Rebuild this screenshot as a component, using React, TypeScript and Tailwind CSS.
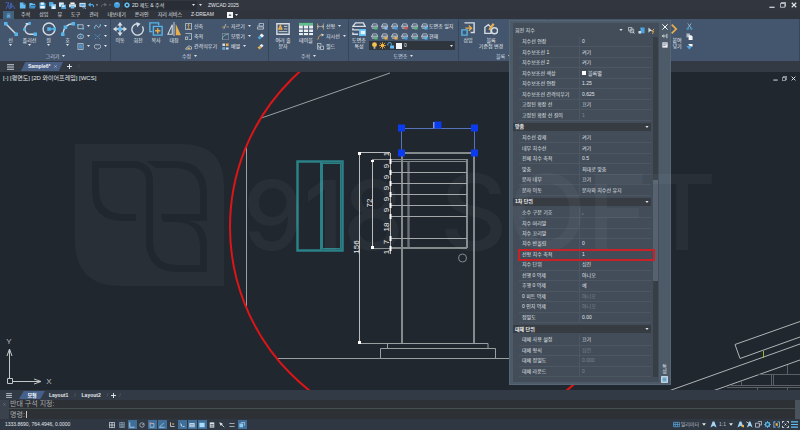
import { ReactNode } from 'react'

type Section = { title: string | null; rows: PropertyRow[] }
type PropertyRow = { label: string; value: string; dim?: boolean; swatch?: boolean; marked?: boolean }

const MENUS = ['주석', '삽입', '뷰', '도구', '관리', '내보내기', '온라인', '지리 서비스', 'Z-DREAM']

const SECTIONS: Section[] = [
  {
    title: null,
    rows: [
      { label: '치수선 연장', value: '0' },
      { label: '치수보조선 1', value: '켜기' },
      { label: '치수보조선 2', value: '켜기' },
      { label: '치수보조선 색상', value: '블록별', swatch: true },
      { label: '치수보조선 연장', value: '1.25' },
      { label: '치수보조선 간격띄우기', value: '0.625' },
      { label: '고정된 확장 선', value: '끄기' },
      { label: '고정된 확장 선 길이', value: '1', dim: true },
    ],
  },
  {
    title: '맞춤',
    rows: [
      { label: '치수선 강제', value: '켜기' },
      { label: '내부 치수선', value: '켜기' },
      { label: '전체 치수 축척', value: '0.5' },
      { label: '맞춤', value: '최대로 맞춤' },
      { label: '문자 내부', value: '끄기' },
      { label: '문자 이동', value: '문자와 치수선 유지' },
    ],
  },
  {
    title: '1차 단위',
    rows: [
      { label: '소수 구분 기호', value: ',' },
      { label: '치수 머리말', value: '' },
      { label: '치수 꼬리말', value: '' },
      { label: '치수 반올림', value: '0' },
      { label: '선형 치수 축척', value: '1', marked: true },
      { label: '치수 단위', value: '십진' },
      { label: '선행 0 억제', value: '아니오' },
      { label: '후행 0 억제', value: '예' },
      { label: '0 피트 억제', value: '아니오', dim: true },
      { label: '0 인치 억제', value: '아니오', dim: true },
      { label: '정밀도', value: '0.00' },
    ],
  },
  {
    title: '대체 단위',
    rows: [
      { label: '대체 사용 설정', value: '끄기' },
      { label: '대체 형식', value: '십진', dim: true },
      { label: '대체 정밀도', value: '0.000', dim: true },
      { label: '대체 라운드', value: '0', dim: true },
    ],
  },
]

const BLUE = '#55b4ea'
const LIGHT = '#d5dce4'
const ORANGE = '#e8ae4c'

function Svg({ children, className = 'size-[8px]' }: { children: ReactNode; className?: string }) {
  return (
    <svg viewBox="0 0 16 16" fill="none" strokeWidth="1.6" aria-hidden="true" className={`shrink-0 ${className}`}>
      {children}
    </svg>
  )
}

function Caret({ className = 'w-[4px] h-[2px]' }: { className?: string }) {
  return (
    <svg viewBox="0 0 8 5" aria-hidden="true" className={`shrink-0 ${className}`}>
      <path d="M0 0h8L4 5z" fill="#dfe4ea" />
    </svg>
  )
}

function Burger({ className = 'w-[7px] h-[6px]' }: { className?: string }) {
  return (
    <svg viewBox="0 0 14 12" aria-hidden="true" className={className}>
      <path d="M0 1.5h14M0 6h14M0 10.5h14" stroke="#dfe4ea" strokeWidth="1.8" />
    </svg>
  )
}

/* Quick access bar */
const QUICK: { name: string; art: ReactNode }[] = [
  { name: '새로 만들기', art: <><path d="M2 1h9l4 4v10H2z" fill="#62bdf2" /><path d="M11 1v4h4" stroke="#30363f" /></> },
  { name: '열기', art: <><path d="M1 2h6l2 2h5v3H5l-3 7H1z" fill="#62bdf2" /><path d="M5 8h11l-3 7H2z" fill="#3f93cc" /></> },
  { name: '저장', art: <><path d="M1 1h12l2 2v12H1z" fill="#4ca5de" /><path d="M4 1h7v5H4zM3 9h10v6H3z" fill="#f1f6fa" /></> },
  { name: '다른 이름으로 저장', art: <><path d="M0 0h10v10H0z" fill="#4ca5de" /><path d="M5 5h11v11H5z" fill="#8dcaf0" /><path d="M8 10h5v6H8z" fill="#fff" /></> },
  { name: '모두 저장', art: <><path d="M0 1h11v10H0z" fill="#dcecf7" /><path d="M5 6h11v10H5z" fill="#4ca5de" /><path d="M7 8h6v3H7z" fill="#fff" /></> },
  { name: '인쇄', art: <><path d="M3 1h10v4H3z" fill="#f0f4f7" /><path d="M0 5h16v7H0z" fill="#cdd6df" /><path d="M4 9h8v6H4z" fill="#62bdf2" /></> },
  { name: '미리보기', art: <><path d="M1 2h14v9H1z" fill="#e8eff5" /><path d="M3 4h10v5H3z" fill="#4ca5de" /><circle cx="11" cy="11" r="3" stroke="#8dcaf0" /><path d="M13 13l3 3" stroke="#8dcaf0" /></> },
]

function TitleBar() {
  return (
    <header className="h-[10px] flex items-center bg-[#31363f] pl-[4px]">
      <Svg className="w-[12px] h-[9px] mr-[1px]">
        <path d="M0 3h6L1 14M6 7v6h3V4h2v9M11 9c3-1 5 1 5 5" stroke="#4a6fd8" strokeWidth="1.4" />
      </Svg>
      {QUICK.map(item => (
        <button key={item.name} aria-label={item.name} className="w-[10px] flex justify-center">
          <Svg className="size-[7px]">{item.art}</Svg>
        </button>
      ))}
      <button aria-label="실행 취소" className="w-[14px] flex items-center gap-[2px] pl-[1px]">
        <Svg className="size-[6px]"><path d="M15 13c0-6-5-7-11-6" stroke={BLUE} strokeWidth="3" /><path d="M0 7l7-6v12z" fill={BLUE} /></Svg>
        <Caret className="w-[2px] h-[2px]" />
      </button>
      <button aria-label="다시 실행" className="w-[13px] flex items-center gap-[2px]">
        <Svg className="size-[6px]"><path d="M1 13c0-6 5-7 11-6" stroke="#68727e" strokeWidth="2" /><path d="M16 7L9 2v10z" fill="#68727e" /></Svg>
        <Caret className="w-[2px] h-[2px] opacity-50" />
      </button>
      <button aria-label="클라우드" className="w-[8px]">
        <Svg className="size-[6px]"><circle cx="8" cy="8" r="8" fill="#3f9fe0" /><path d="M3 6c2-3 6-4 9-1" stroke="#b5dcf5" /></Svg>
      </button>
      <button className="ml-[1px] h-[9px] w-[74px] flex items-center gap-[2px] bg-[#292e36] pl-[1px] pr-[2px]">
        <Svg className="size-[6px]"><circle cx="8" cy="8" r="5" stroke="#62bdf2" strokeWidth="4" /><path d="M8 0v16M0 8h16M2 2l12 12M14 2L2 14" stroke="#62bdf2" strokeWidth="1" strokeDasharray="3 10" /></Svg>
        <span className="flex-1 text-left">2D 제도 &amp; 주석</span>
        <Caret className="w-[3px] h-[2px]" />
      </button>
      <Caret className="ml-[2px] w-[3px] h-[2px]" />
      <span className="ml-[6px]">ZWCAD 2025</span>
      <div className="ml-auto flex items-center gap-[5px] pr-[3px]">
        <button aria-label="최소화"><Svg className="size-[6px]"><path d="M1 14h14" stroke="#e6e9ec" strokeWidth="3" /></Svg></button>
        <button aria-label="최대화"><Svg className="size-[6px]"><path d="M1 4h12v10H1zM4 3V1h11v10h-2" stroke="#e6e9ec" strokeWidth="2" /></Svg></button>
        <button aria-label="닫기"><Svg className="size-[6px]"><path d="M2 2l12 12M14 2L2 14" stroke="#e6e9ec" strokeWidth="3" /></Svg></button>
      </div>
    </header>
  )
}

function MenuBar() {
  return (
    <nav className="h-[9px] flex items-center gap-[9px] bg-[#30353d] pl-[3px]">
      <a href="#home" className="w-[11px] -mr-[2px] h-[8px] leading-[8px] text-center bg-[#3e627f] text-[#8cc9ef]">홈</a>
      {MENUS.map(menu => (
        <a key={menu} href={`#${menu}`}>{menu}</a>
      ))}
      <button aria-label="리본 표시" className="ml-[4px] flex items-center gap-[2px]">
        <Svg className="size-[6px]"><path d="M0 0h16v16H0z" fill="#f3f5f7" /><path d="M4 10l4-5 4 5z" fill="#30353d" /></Svg>
        <Caret className="w-[3px] h-[2px]" />
      </button>
    </nav>
  )
}

function Panel({ title, className, children }: { title: string; className: string; children: ReactNode }) {
  return (
    <section className={`h-full flex flex-col shrink-0 border-r border-[#37475a] ${className}`}>
      <div className="h-[32px] flex">{children}</div>
      <div className="h-[10px] flex items-center justify-center gap-[3px] text-[#d3dae2]">
        {title}
        {title && <Caret className="w-[3px] h-[2px]" />}
      </div>
    </section>
  )
}

function BigTool({ lines, art, className, caret }: { lines: string[]; art: ReactNode; className: string; caret?: boolean }) {
  return (
    <button className={`flex flex-col items-center shrink-0 pt-[3px] ${className}`}>
      <Svg className="size-[14px] mb-[1px]">{art}</Svg>
      {lines.map(line => (
        <span key={line} className="leading-[6px] whitespace-nowrap">{line}</span>
      ))}
      {caret && <Caret className="mt-[1px] w-[3px] h-[2px]" />}
    </button>
  )
}

function SmallTool({ label, text, art, caret }: { label: string; text?: boolean; art: ReactNode; caret?: boolean }) {
  return (
    <button aria-label={label} className="h-[10px] flex items-center gap-[2px] whitespace-nowrap">
      <Svg className="size-[7px]">{art}</Svg>
      {text && <span>{label}</span>}
      {caret && <Caret className="w-[3px] h-[2px] ml-[1px]" />}
    </button>
  )
}

const sheet = (color: string) => (
  <>
    <path d="M2 7l2-5h9l2 5" stroke={LIGHT} />
    <path d="M1 7h14v2H1zM2 12h7" stroke={LIGHT} />
    <path d="M8 9h7v6H8z" fill={color} />
  </>
)

const LAYER_ROWS = [
  ['#55b878', '#8db8e8', '#3f9fe0', '#d9524e', '#55b878', '#55b4ea'],
  ['#55b878', '#e8ae4c', '#e8ae4c', '#3f9fe0', '#5aa9a0', '#55b4ea'],
]

function LayerRow({ colors, label, start }: { colors: string[]; label: string; start: number }) {
  return (
    <div className="h-[10px] flex items-center">
      {colors.map((color, i) => (
        <button key={i} aria-label={`도면층 도구 ${start + i}`} className="w-[10px] flex justify-center">
          <Svg className="size-[7px]">{sheet(color)}</Svg>
        </button>
      ))}
      <button className="whitespace-nowrap">{label}</button>
    </div>
  )
}

function Ribbon() {
  return (
    <div className="h-[42px] flex overflow-hidden bg-[#44566d] text-[#e8ecf1]">
      <Panel title="그리기" className="w-[111px] pl-[1px]">
        <BigTool className="w-[19px]" caret lines={['선']} art={<><path d="M2 2l12 12" stroke={LIGHT} /><path d="M0 0h4v4H0zM12 12h4v4h-4z" fill={BLUE} /></>} />
        <BigTool className="w-[19px]" caret lines={['폴리선']} art={<><path d="M3 2h5M8 14h6" stroke={LIGHT} /><path d="M8 2a6 6 0 000 12" stroke={LIGHT} /><path d="M12 12h4v4h-4zM6 0h3v3H6zM0 7h3v3H0z" fill={BLUE} /></>} />
        <BigTool className="w-[19px]" caret lines={['원']} art={<><circle cx="8" cy="8" r="6.8" stroke={LIGHT} /><path d="M8 8h7" stroke={BLUE} /><path d="M6 6h4v4H6zM13 6h3v4h-3z" fill={BLUE} /></>} />
        <BigTool className="w-[19px]" caret lines={['호']} art={<><path d="M2 14C3 7 7 2 14 2" stroke={LIGHT} /><path d="M0 12h4v4H0zM3 4h4v4H3zM12 0h4v4h-4z" fill={BLUE} /></>} />
        <div className="grid grid-cols-2 gap-x-[4px] content-start pt-[2px]">
          <SmallTool caret label="직사각형" art={<><path d="M2 4h12v9H2z" stroke={LIGHT} /><path d="M0 2h4v4H0zM12 11h4v4h-4z" fill={BLUE} /></>} />
          <SmallTool caret label="스플라인" art={<><path d="M1 11c3-9 5-6 7-3s4 4 7-4" stroke={LIGHT} /><path d="M0 10h3v3H0zM13 3h3v3h-3z" fill={BLUE} /></>} />
          <SmallTool caret label="타원" art={<><ellipse cx="8" cy="8" rx="7" ry="5" stroke={LIGHT} /><path d="M6 6h4v4H6zM6 1h4v3H6z" fill={BLUE} /></>} />
          <SmallTool caret label="점" art={<path d="M2 3l3 3M14 3l-3 3M2 14l3-3M14 14l-3-3M7 8h3" stroke={BLUE} />} />
          <SmallTool caret label="해치" art={<><path d="M2 1h12v14H2z" stroke={LIGHT} /><path d="M4 3h8v10H4z" fill="#4a93c4" /></>} />
          <SmallTool caret label="구름형" art={<path d="M3 4h10c3 0 3 8 0 8h-2c-1 3-5 3-6 0H3c-3 0-3-8 0-8z" stroke={LIGHT} />} />
        </div>
      </Panel>

      <Panel title="수정" className="w-[158px]">
        <BigTool className="w-[18px]" lines={['이동']} art={<><path d="M8 1v14M1 8h14" stroke={LIGHT} /><path d="M8 0l3 4H5zM8 16l3-4H5zM0 8l4-3v6zM16 8l-4-3v6z" fill={LIGHT} /><path d="M6 6h4v4H6z" fill={BLUE} /></>} />
        <BigTool className="w-[18px]" lines={['회전']} art={<><path d="M7 2a6.500 6.500 0 106 3" stroke={LIGHT} /><path d="M6 0l5 2-4 4z" fill={LIGHT} /></>} />
        <BigTool className="w-[18px]" lines={['복사']} art={<><path d="M11 4V1H1v10h3" stroke={BLUE} /><path d="M5 5h10v10H5z" stroke={BLUE} /><path d="M10 7v6M7 10h6" stroke={ORANGE} /></>} />
        <BigTool className="w-[18px]" lines={['대칭']} art={<><path d="M6 3v11H1z" stroke={LIGHT} strokeWidth="1.2" /><path d="M10 2v13h6z" fill={ORANGE} /><path d="M8 0v16" stroke={LIGHT} strokeWidth="1" /></>} />
        <div className="w-[39px] flex flex-col items-start pt-[2px] pl-[2px]">
          <SmallTool text label="신축" art={<><path d="M1 1h14v14H1z" stroke={LIGHT} /><path d="M8 3v8M5 6l3-3 3 3M5 13h6" stroke={ORANGE} /></>} />
          <SmallTool text label="축척" art={<><path d="M1 1h14v14H9" stroke={LIGHT} /><path d="M1 9h5v6H1z" stroke={LIGHT} /><path d="M8 8l4-3" stroke={BLUE} /></>} />
          <SmallTool text label="간격띄우기" art={<><path d="M1 14h14V9a7 7 0 00-10 0z" stroke={LIGHT} /><path d="M6 10h5v4H6z" fill={ORANGE} /></>} />
        </div>
        <div className="w-[35px] flex flex-col items-start pt-[2px]">
          <SmallTool text caret label="자르기" art={<><path d="M0 9h5M10 9h6" stroke={ORANGE} /><path d="M4 14L9 2" stroke={LIGHT} /></>} />
          <SmallTool text caret label="모깎기" art={<><path d="M1 15V1h14v14z" stroke="#a9b6c4" strokeWidth="1" /><path d="M1 15C1 7 6 3 15 3" stroke="#8fd0b0" /></>} />
          <SmallTool text caret label="배열" art={<><path d="M1 1h6v6H1zM1 10h6v5H1zM9 10h6v5H9z" fill={LIGHT} /><path d="M9 1h6v6H9z" fill={ORANGE} /><path d="M1 10h6v5H1z" fill="#4ca5de" /></>} />
        </div>
        <div className="flex flex-col pt-[2px]">
          <SmallTool label="정렬" art={<><path d="M5 1h10v6H5z" stroke={LIGHT} /><path d="M1 9h14v5H1z" stroke={LIGHT} /><path d="M1 6h3" stroke={BLUE} /></>} />
          <SmallTool label="지우기" art={<><path d="M6 5l5-4 5 5-5 5z" fill="#f2f5f8" /><path d="M1 10l5-4 5 5-5 4z" fill="#4ca5de" /></>} />
          <SmallTool label="분해" art={<><path d="M6 5l5-3 4 4-5 5z" fill="#e6edf3" /><path d="M1 10l5-3 4 4-4 4z" fill={ORANGE} /></>} />
        </div>
      </Panel>

      <Panel title="주석" className="w-[80px]">
        <BigTool className="w-[28px]" lines={['여러 줄', '문자']} art={<><path d="M1 2h14v12H1z" stroke={LIGHT} /><path d="M3 9l2-5 2 5M4 8h2" stroke={ORANGE} /><path d="M9 5h4M9 8h4M3 11h10" stroke={LIGHT} strokeWidth="1" /></>} />
        <BigTool className="w-[18px]" lines={['테이블']} art={<><path d="M0 1h16v3H0z" fill="#5dbf8a" /><path d="M0 4h16v11H0z" fill="#e9eef2" /><path d="M0 8h16M0 12h16M5 4v11M11 4v11" stroke="#44566d" strokeWidth="1.2" /></>} />
        <div className="flex flex-col items-start pt-[2px] pl-[2px]">
          <SmallTool text caret label="선형" art={<><path d="M1 1v14M15 1v14" stroke={ORANGE} /><path d="M1 8h14M4 5L1 8l3 3M12 5l3 3-3 3" stroke={LIGHT} strokeWidth="1.2" /></>} />
          <SmallTool text caret label="지시선" art={<><path d="M2 15c1-6 4-10 8-11h5" stroke={ORANGE} strokeWidth="2" /><path d="M10 1l6 3-5 4z" fill={LIGHT} /></>} />
          <SmallTool text label="필드" art={<><path d="M9 5V1H1v13h6" stroke={LIGHT} /><path d="M8 7h7v8H8zM4 5v5h4" stroke={LIGHT} /></>} />
        </div>
      </Panel>

      <Panel title="도면층" className="w-[110px]">
        <BigTool className="w-[20px]" lines={['도면층', '특성']} art={<><path d="M1 5l3-4h9l2 4zM1 7v2h8M1 12v2h6" stroke={LIGHT} /><path d="M8 8h8v8H8z" fill="#62bdf2" /><path d="M10 10h5v4h-5z" fill="#e7f3fb" /></>} />
        <div className="flex-1 flex flex-col pt-[2px]">
          <LayerRow colors={LAYER_ROWS[0]} label="도면층 일치" start={1} />
          <LayerRow colors={LAYER_ROWS[1]} label="현재" start={7} />
          <button aria-label="현재 도면층 0" className="mr-[3px] h-[9px] flex items-center gap-[1px] bg-[#2f353c] px-[2px]">
            <Svg className="size-[7px]"><circle cx="8" cy="6" r="5.500" fill="#f4c34f" /><path d="M6 12h4v3H6z" fill="#dfe4ea" /></Svg>
            <Svg className="size-[7px]"><circle cx="8" cy="8" r="4" fill="#f4b63f" /><path d="M8 0v16M0 8h16M2 2l12 12M14 2L2 14" stroke="#f4b63f" /></Svg>
            <Svg className="size-[7px]"><path d="M2 8V5a4 4 0 018 0v3" stroke="#55b4ea" strokeWidth="2" /><path d="M7 8h9v7H7z" fill="#62bdf2" /></Svg>
            <span className="size-[6px] mx-[1px] bg-[#f4f4f4]" />
            <span className="flex-1 text-left">0</span>
            <Caret className="w-[3px] h-[2px]" />
          </button>
        </div>
      </Panel>

      <Panel title="블록" className="w-[90px]">
        <BigTool className="w-[18px]" lines={['삽입']} art={<><path d="M4 1h11v11h-4" stroke={LIGHT} /><path d="M1 9h6v6H1z" stroke={BLUE} /><path d="M5 7h6M9 4l3 3-3 3" stroke={ORANGE} /></>} />
        <BigTool className="w-[28px]" lines={['블록', '기준점 변경']} art={<><path d="M1 13V6l4-3 3 3v7z" stroke={LIGHT} /><circle cx="12" cy="10" r="3.500" stroke={LIGHT} /><path d="M6 9l5-7" stroke={ORANGE} strokeWidth="2.500" /></>} />
      </Panel>

      <Panel title="" className="ml-auto w-[131px]">
        <BigTool className="w-[16px]" lines={['붙여', '넣기']} art={<path d="M2 3l5 5-5 5" stroke={ORANGE} strokeWidth="2" />} />
        <div className="flex flex-col pt-[2px] pl-[1px]">
          <SmallTool label="잘라내기" art={<><path d="M4 1l7 10M12 1L5 11" stroke="#9fd0ee" /><circle cx="4" cy="13" r="2" stroke={BLUE} /><circle cx="12" cy="13" r="2" stroke={BLUE} /></>} />
          <SmallTool label="복사하기" art={<><path d="M1 1h8v9H1z" fill="#aab6c3" /><path d="M6 5h6l3 3v8H6z" fill="#f4f7f9" /></>} />
          <SmallTool label="특성 일치" art={<><path d="M5 2h10v6H9z" fill="#f4f7f9" /><path d="M1 7l8-1 3 5-5 4z" fill="#4ca5de" /></>} />
        </div>
      </Panel>
    </div>
  )
}

function FileTabs() {
  return (
    <div className="h-[11px] flex items-center bg-[#343a44] pl-[7px]">
      <button aria-label="도면 메뉴"><Burger /></button>
      <div className="ml-[7px] w-[42px] h-[9px] flex items-center justify-between bg-[#4a5f86] pl-[7px] pr-[6px] [clip-path:polygon(10%_0,100%_0,90%_100%,0_100%)]">
        <a href="#sample" className="font-bold text-[#f0f3f7]">Sample6*</a>
        <button aria-label="탭 닫기" className="flex"><Svg className="size-[3px]"><path d="M1 1l14 14M15 1L1 15" stroke="#b8c3d6" strokeWidth="3" /></Svg></button>
      </div>
      <button aria-label="새 탭" className="ml-[4px]"><Svg className="size-[5px]"><path d="M8 0v16M0 8h16" stroke="#e6e9ec" strokeWidth="3" /></Svg></button>
      <span className="ml-[6px] text-[#59616d]">/</span>
    </div>
  )
}

function Grip({ x, y }: { x: number; y: number }) {
  return <rect x={x - 3.5} y={y - 3.5} width="7" height="7" fill="#0a3bef" />
}

const CHAIN_TICKS = [161, 172, 183, 194, 205, 216, 238, 248]
const CHAIN_LABELS: [string, number][] = [['1', 154], ['9', 166], ['9', 177], ['9', 188], ['9', 199], ['9', 210], ['18', 227], ['7', 242], ['1', 252]]

function Vertical({ x, y, children }: { x: number; y: number; children: ReactNode }) {
  return (
    <text transform={`translate(${x} ${y}) rotate(-90)`} textAnchor="middle" className="fill-[#eceeef] text-[8px]">
      {children}
    </text>
  )
}

/* Model space: coordinates are shifted so that y = 72 is the top of the view */
function Drawing() {
  return (
    <svg className="absolute inset-0 size-full" aria-label="도면">
      <g transform="translate(0 -72)" fill="none" stroke="#9a9fa2" strokeWidth="1">
        <path d="M261.500 118L390 73M246.500 147V307M276 358.500H520" />

        <g stroke="#2b8188">
          <rect x="297.500" y="161.500" width="45" height="89" strokeWidth="2.500" />
          <path d="M321 162v88" strokeWidth="2" />
          <rect x="322.500" y="163.500" width="18" height="85" />
        </g>

        {/* door */}
        <g stroke="#858a8c">
          <path d="M402 343V153h72v190" strokeWidth="2" />
          <path d="M372 159.500h96M391 161.500h76M408 161v86" />
          <path d="M409 161v86M466.500 160v88M467.500 160v88M391 247.500h76M372 248.500h95" />
          <path d="M391 172.500h76M391 183.500h76M391 194.500h76M391 205.500h76M391 216.500h76M391 238.500h76" stroke="#a4a8aa" />
          <circle cx="462.500" cy="258" r="4" />
          <path d="M387.500 348V343.500M359 343.500h129V348M380.500 358V348.500h115V358" stroke="#9a9fa2" />
        </g>

        {/* dimensions */}
        <path d="M359.500 153v190M359 152.500h31M372.500 160v88M390.500 153v101" stroke="#b9bdbf" />
        {CHAIN_TICKS.map(y => (
          <path key={y} d={`M390.500 ${y - 2}v5`} stroke="#fff" strokeWidth="2" />
        ))}
        <path d="M358 152h3v3h-3zM358 341h3v3h-3zM371 160h3v2h-3zM371 246h3v3h-3z" fill="#fff" stroke="none" />
        <g stroke="none">
          {CHAIN_LABELS.map(([text, y]) => (
            <Vertical key={y} x={389} y={y}>{text}</Vertical>
          ))}
          <Vertical x={372} y={203}>72</Vertical>
          <Vertical x={359} y={247}>156</Vertical>
        </g>

        {/* selected dimension */}
        <path d="M401.500 152V128.500h73V152" stroke="#5672bd" />
        <g stroke="none">
          <rect x="433" y="122" width="3" height="6" fill="#7f95d8" />
          <Grip x={401.5} y={128} />
          <Grip x={474.5} y={128} />
          <Grip x={401.5} y={153} />
          <Grip x={474.5} y={153} />
          <Grip x={438} y={125} />
        </g>

        {/* roof and bricks */}
        <path d="M800 321.500L735 344.500l5 14L800 337M670 390.500L800 344M714 390.500L800 360" stroke="#b0b4b6" />
        <path d="M787.500 365v9M757 374.500h43M771.500 374v11M773.500 374v11M741.500 381v4M731 385.500h69M727 387.500h73M757.500 387v4M787.500 387v4" stroke="#5a6065" />
        <path d="M763.500 351v7" stroke="#9fb52c" />

        <circle cx="438" cy="227" r="208" stroke="#dc1518" strokeWidth="2" />

        {/* UCS icon */}
        <path d="M9.500 378V349M7 356l2.500-7 2.500 7M12 381.500h29M34 379l7 2.500-7 2.500M7.500 378.500h5v5h-5z" stroke="#c3c7ca" />
        <g stroke="none" className="fill-[#b9bdc1] text-[8px]" textAnchor="middle">
          <text x="9" y="344">Y</text>
          <text x="49" y="384">X</text>
        </g>
      </g>
    </svg>
  )
}

function Watermark() {
  return (
    <svg className="absolute inset-0 size-full pointer-events-none" aria-hidden="true">
      <g transform="translate(0 -72)" opacity="0.035">
        <path
          fillRule="evenodd"
          fill="#fff"
          d="M75 144h107q42 0 42 42v100H121q-46 0-46-46z
             M92 161v29q0 31 31 31h13v-7h-12q-25 0-25-25v-21h33q14 0 14 14v58q0 32 32 32h29v-26q0-25-22-25h22v-27q0-33-33-33h-28l10 7h18q26 0 26 26v20h-39l2 8h12q25 0 25 25v18h-22q-25 0-25-25v-58q0-21-21-21z"
        />
        <text x="243" y="250" fill="#fff" className="text-[96px] font-medium font-[Inter,sans-serif]">918</text>
        <text x="440" y="250" fill="#fff" className="text-[104px] font-medium font-[Inter,sans-serif]">SOFT</text>
      </g>
    </svg>
  )
}

function Property({ row }: { row: PropertyRow }) {
  return (
    <tr
      className={`flex-1 flex items-center ml-[6px] border-b border-[#4c5763] ${
        row.marked ? 'relative z-10 -mr-[3px] outline-2 outline-solid -outline-offset-1 outline-[#c92226]' : ''
      }`}
    >
      <th scope="row" className="w-[60px] pl-[3px] text-left font-normal whitespace-nowrap">{row.label}</th>
      <td className={`flex-1 h-full flex items-center gap-[2px] border-l border-[#4c5763] pl-[2px] whitespace-nowrap ${row.dim ? 'text-[#7b8691]' : ''}`}>
        {row.swatch && <span className="size-[4px] bg-white" />}
        {row.value}
      </td>
    </tr>
  )
}

function PropertiesPalette() {
  return (
    <aside className="absolute right-[129px] top-[20px] w-[162px] h-[365px] flex bg-[#4d5b69] border border-[#566676] text-[#e0e5ea]">
      <div className="flex-1 flex flex-col my-[2px] ml-[3px] bg-[#424d59]">
        <div className="h-[14px] flex items-center gap-[3px] pl-[2px] pr-[4px]">
          <button className="flex-1 h-[12px] flex items-center justify-between">
            회전 치수
            <Caret />
          </button>
          <button aria-label="선택 추가" className="ml-[2px]"><Svg className="size-[7px]"><path d="M1 1h8v8H1zM5 5h8v8H5z" stroke={LIGHT} /><path d="M10 10l5 5" stroke={LIGHT} /></Svg></button>
          <button aria-label="객체 선택"><Svg className="size-[7px]"><path d="M5 1h10v13H7z" fill="#4ca5de" /><path d="M1 9h6v6H1z" fill={LIGHT} /></Svg></button>
          <button aria-label="빠른 선택"><Svg className="size-[7px]"><path d="M1 1v12l4-4h5z" fill={LIGHT} /><path d="M14 4l-5 6h4l-3 6" stroke={ORANGE} strokeWidth="2" /></Svg></button>
        </div>
        <div className="flex-1 flex">
          <table className="flex-1 flex flex-col">
            <tbody className="flex-1 flex flex-col">
              {SECTIONS.map(section => [
                section.title && (
                  <tr key={section.title} className="h-[12px] flex items-center py-[2px]">
                    <th scope="colgroup" className="flex-1 h-[8px] flex items-center justify-between bg-[#373c42] px-[2px] text-[#eef1f4]">
                      {section.title}
                      <Caret />
                    </th>
                  </tr>
                ),
                ...section.rows.map(row => <Property key={row.label} row={row} />),
              ])}
            </tbody>
          </table>
          <div className="ml-[2px] mr-[1px] w-[5px] flex flex-col bg-[#383e46]">
            <div className="mt-[143px] h-[101px] bg-[#56626f]" />
          </div>
        </div>
        <div className="h-[5px]" />
      </div>
      <div className="w-[11px] flex flex-col items-center pt-[1px] pb-[1px]">
        <button aria-label="팔레트 닫기" className="h-[9px]"><Svg className="size-[6px]"><path d="M1 1l14 14M15 1L1 15" stroke="#fff" strokeWidth="2.500" /></Svg></button>
        <button aria-label="자동 숨기기" className="h-[9px]"><Svg className="size-[6px]"><path d="M1 8h9M5 4L1 8l4 4M13 2v12" stroke="#fff" strokeWidth="2" /></Svg></button>
        <button aria-label="팔레트 메뉴" className="h-[9px]"><Svg className="size-[6px]"><path d="M1 1h14v14H1z" fill="#eef1f4" /><path d="M3 5h10M3 9h7" stroke="#4d5b69" /></Svg></button>
        <span className="mt-auto w-[5px] leading-[5px] text-center">특성</span>
        <Svg className="size-[7px] mt-[2px]"><path d="M1 1h14v14H1z" fill="#9cc9e6" stroke="#e6f1f8" /><path d="M4 5h8M4 8h8M4 11h8" stroke="#4d86ad" /></Svg>
      </div>
    </aside>
  )
}

function LayoutTabs() {
  return (
    <div className="h-[10px] flex items-center gap-[6px] bg-[#323a45] pl-[6px]">
      <button aria-label="배치 메뉴"><Burger className="w-[6px] h-[5px]" /></button>
      <a href="#model" className="ml-[1px] w-[26px] h-[8px] leading-[8px] text-center font-bold bg-[#45608a] text-white [clip-path:polygon(18%_0,100%_0,82%_100%,0_100%)]">모형</a>
      <a href="#layout1" className="-ml-[2px] font-bold">Layout1</a>
      <span className="text-[#6b7480]">/</span>
      <a href="#layout2" className="font-bold">Layout2</a>
      <span className="text-[#6b7480]">/</span>
      <button aria-label="배치 추가" className="-ml-[3px]"><Svg className="size-[5px]"><path d="M8 0v16M0 8h16" stroke="#e6e9ec" strokeWidth="3" /></Svg></button>
      <span className="-ml-[3px] text-[#6b7480]">/</span>
    </div>
  )
}

function CommandLine() {
  return (
    <div className="h-[19px] flex bg-[#2d3035] text-[7px] text-[#a9adb1]">
      <div className="w-[9px] flex flex-col items-center bg-[#3a424d] pt-[3px]">
        <Svg className="size-[3px]"><path d="M1 1l14 14M15 1L1 15" stroke="#6d7681" strokeWidth="3" /></Svg>
      </div>
      <div className="flex-1 flex flex-col">
        <div className="h-[9px] leading-[8px] pl-[1px] border-b border-[#46504f]">반대 구석 지정:</div>
        <label className="h-[10px] flex items-center pl-[1px]">
          명령:
          <input type="text" aria-label="명령" className="ml-[1px] h-[7px] flex-1 border-l border-[#c5c9cc] bg-transparent outline-none" />
        </label>
      </div>
      <div className="w-[5px] bg-[#4a525c]" />
    </div>
  )
}

const MODES: { name: string; on?: boolean; art: ReactNode }[] = [
  { name: '그리드', art: <path d="M1 1h14v14H1zM1 8h14M8 1v14" stroke="#dce6ee" strokeWidth="2" /> },
  { name: '스냅', art: <path d="M2 1h12v14H2zM2 6h12M2 11h12M8 1v14" stroke="#9cbcd6" /> },
  { name: '직교', on: true, art: <path d="M2 1v13h13" stroke="#cfe3f2" strokeWidth="2" /> },
  { name: '극좌표', art: <><circle cx="8" cy="8" r="6" stroke="#cfd8e0" /><path d="M8 8l6-4" stroke="#cfd8e0" /></> },
  { name: '객체 스냅', on: true, art: <><path d="M3 4h10v10H3z" stroke="#cfe3f2" /><path d="M1 1h5v5H1z" fill="#d0857e" /></> },
  { name: '객체 추적', on: true, art: <path d="M1 14L13 2M1 14h14" stroke="#a7d6f4" strokeWidth="2" /> },
  { name: '동적 UCS', art: <><path d="M4 1v11h11" stroke="#dce6ee" strokeWidth="2" /><path d="M9 3h4v4H9z" fill={ORANGE} /></> },
  { name: '동적 입력', on: true, art: <><path d="M3 2l3 11 2-5z" fill="#cfe3f2" /><path d="M9 12h6" stroke="#cfe3f2" strokeWidth="2" /></> },
  { name: '선가중치', on: true, art: <><path d="M1 3h14v11H1z" fill="#d6e4ee" /><path d="M3 7h10M3 11h10" stroke="#3f6f9c" /></> },
  { name: '투명도', on: true, art: <path d="M1 2h14v12H1z" fill="#a9dcfa" /> },
  { name: '빠른 특성', art: <><path d="M2 1h12v14H2z" fill="#dde3e8" /><path d="M4 7h8M4 11h8" stroke="#303640" strokeWidth="2" /></> },
  { name: '선택 순환', art: <path d="M2 2l7 3-4 4zM8 8l6 6" stroke="#e4e9ed" fill="#e4e9ed" strokeWidth="2" /> },
  { name: '주석 감시', art: <path d="M1 4h14M1 12h14" stroke="#c4ccd4" strokeWidth="2" /> },
  { name: '모형', on: true, art: <><path d="M1 4h10v10H1z" fill="#8cc9ef" /><path d="M5 1h10v9" stroke="#d6e9f6" /></> },
]

const TRAY: { name: string; art: ReactNode }[] = [
  { name: '주석 가시성', art: <><path d="M6 1h4l5 14-7-4-7 4z" fill="#a6d5f3" /><path d="M11 9h5v5h-5z" fill={ORANGE} /></> },
  { name: '주석 축척 추가', art: <><path d="M7 1h3l5 14-6-4-7 4z" fill="#a6d5f3" /><path d="M1 2l5 3" stroke="#fff" /></> },
  { name: '잠금', art: <><path d="M1 5h9v9H1z" stroke="#dce3e9" /><path d="M7 1h8v8h-5" stroke="#dce3e9" /></> },
  { name: '설정', art: <><circle cx="8" cy="8" r="4.500" stroke="#5cb6ec" strokeWidth="3" /><path d="M8 0v3M8 13v3M0 8h3M13 8h3M2 2l2 2M12 12l2 2M14 2l-2 2M4 12l-2 2" stroke="#5cb6ec" strokeWidth="2" /></> },
  { name: '객체 분리', art: <><path d="M1 2h5M1 14h5M2 2v12M10 2h5v12h-5" stroke="#7ebfe8" strokeWidth="2" /><path d="M6 5h5v6H6z" fill={ORANGE} /></> },
  { name: '전체 화면', art: <path d="M1 5V1h4M11 1h4v4M15 11v4h-4M5 15H1v-4M6 6l4 4M10 6l-4 4" stroke="#e4e9ed" strokeWidth="2" /> },
  { name: '사용자화', art: <path d="M0 2h16M0 8h16M0 14h16" stroke="#62bdf2" strokeWidth="2.500" /> },
]

function StatusBar() {
  return (
    <footer className="h-[11px] flex items-center bg-[#2f3742] pl-[5px] pr-[1px]">
      <span className="w-[102px]">1333.8690, 764.4946, 0.0000</span>
      {MODES.map(mode => (
        <button key={mode.name} aria-label={mode.name} className="w-[10px] flex justify-center">
          <span className={`size-[9px] flex items-center justify-center ${mode.on ? 'bg-[#3f6e98]' : ''}`}>
            <Svg className="size-[6px]">{mode.art}</Svg>
          </span>
        </button>
      ))}
      <button className="ml-auto flex items-center gap-[1px] text-[#b5bcc4]">
        <Svg className="size-[7px]"><path d="M1 3h14v10H1zM1 8h14M5 3v10M10 3v10" stroke="#5aa9dc" /></Svg>
        밀리미터
        <Caret className="ml-[2px] w-[4px] h-[3px]" />
      </button>
      <button className="ml-[4px] mr-[3px] flex items-center gap-[2px] text-[#b5bcc4]">
        <Svg className="size-[7px]"><path d="M6 1h4l5 14-7-4-7 4z" fill="#a6d5f3" /></Svg>
        1:1
        <Caret className="ml-[1px] w-[4px] h-[3px]" />
      </button>
      {TRAY.map(item => (
        <button key={item.name} aria-label={item.name} className="w-[9px] flex justify-center">
          <Svg className="size-[7px]">{item.art}</Svg>
        </button>
      ))}
    </footer>
  )
}

export default function App() {
  return (
    <div className="relative h-screen flex flex-col overflow-hidden bg-[#21272e] text-[5px] leading-[7px] text-[#e2e6ea] font-['Liberation_Sans','Noto_Sans_CJK_KR',sans-serif]">
      <TitleBar />
      <MenuBar />
      <Ribbon />
      <FileTabs />
      <main className="relative flex-1">
        <Drawing />
        <div className="relative flex items-center justify-between pl-[3px] pr-[4px] pt-[3px]">
          <span className="text-[6px]">[-] [평면도] [2D 와이어프레임] [WCS]</span>
          <div className="flex gap-[4px]">
            <button aria-label="도면 최소화"><Svg className="size-[5px]"><path d="M1 13h14" stroke="#e6e9ec" strokeWidth="3" /></Svg></button>
            <button aria-label="도면 복원"><Svg className="size-[5px]"><path d="M1 5h10v10H1zM5 4V1h10v10h-3" stroke="#e6e9ec" strokeWidth="2" /></Svg></button>
            <button aria-label="도면 닫기"><Svg className="size-[5px]"><path d="M2 2l12 12M14 2L2 14" stroke="#e6e9ec" strokeWidth="3" /></Svg></button>
          </div>
        </div>
      </main>
      <LayoutTabs />
      <CommandLine />
      <StatusBar />
      <PropertiesPalette />
      <div className="absolute inset-x-0 top-[72px] bottom-[40px] pointer-events-none">
        <Watermark />
      </div>
    </div>
  )
}
